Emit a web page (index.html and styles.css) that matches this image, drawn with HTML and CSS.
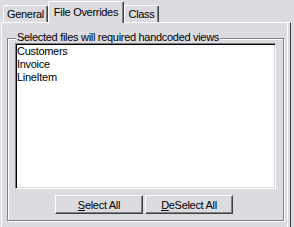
FILE: index.html
```html
<!DOCTYPE html>
<html lang="en">
<head>
  <meta charset="UTF-8" />
  <title>File Overrides</title>
  <link rel="stylesheet" href="styles.css">
</head>
<body>
  <div class="tabstrip">
    <div class="tab">General</div>
    <div class="tab tab-active">File Overrides</div>
    <div class="tab tab-class">Class</div>
  </div>
  <div class="panel">
    <fieldset class="group">
      <legend>Selected files will required handcoded views</legend>
      <div class="listbox">
        <div class="item">Customers</div>
        <div class="item">Invoice</div>
        <div class="item">LineItem</div>
      </div>
      <div class="buttons">
        <button type="button" class="btn"><u>S</u>elect All</button>
        <button type="button" class="btn"><u>D</u>eSelect All</button>
      </div>
    </fieldset>
  </div>
</body>
</html>
```

FILE: styles.css
```css
* {
  box-sizing: border-box;
}
body {
  margin: 0;
  width: 294px;
  height: 227px;
  overflow: hidden;
  background-color: #dbdbe0;
  font-family: "Liberation Sans", Arial, sans-serif;
  font-size: 11px;
  letter-spacing: -0.3px;
  color: #000;
}
.tabstrip {
  display: flex;
  align-items: flex-end;
  height: 22px;
  padding-left: 3px;
}
.tab {
  width: 45px;
  height: 17px;
  line-height: 16px;
  text-align: center;
  border-top: 1px solid #fff;
  border-left: 1px solid #fff;
  border-right: 1px solid #404040;
  border-radius: 2px 2px 0 0;
  box-shadow: inset -1px 0 0 #808080;
}
.tab-active {
  position: relative;
  z-index: 1;
  width: 76px;
  height: 22px;
  margin-bottom: -1px;
  padding-top: 3px;
  line-height: 14px;
  background-color: #dbdbe0;
}
.tab-class {
  width: 35px;
}
.panel {
  width: 290px;
  height: 210px;
  margin-left: 1px;
  border-top: 1px solid #fff;
  border-left: 1px solid #fff;
  border-right: 1px solid #404040;
  box-shadow: inset -2px 0 0 #dbdbe0, inset -3px 0 0 #fff;
}
.group {
  width: 277px;
  margin: 8px 0 0 5px;
  padding: 0 7px 6px;
  border: 1px solid #808080;
  box-shadow: 1px 1px 0 #fff, inset 1px 1px 0 #fff;
}
.group legend {
  margin-left: 1px;
  padding: 0 1px 3px;
  line-height: 12px;
  background-color: #dbdbe0;
}
.listbox {
  height: 146px;
  margin-top: -3px;
  padding: 1px 0 0 1px;
  background-color: #fff;
  border: 1px solid;
  border-color: #808080 #fff #fff #808080;
  box-shadow: inset 1px 1px 0 #000, inset -1px -1px 0 #dbdbe0;
}
.item {
  line-height: 13px;
}
.buttons {
  display: flex;
  gap: 2px;
  margin: 6px 0 0 40px;
}
.btn {
  width: 88px;
  height: 19px;
  padding: 0;
  font-family: inherit;
  font-size: 11px;
  letter-spacing: -0.3px;
  color: #000;
  background-color: #dbdbe0;
  border-top: 1px solid #fff;
  border-left: 1px solid #fff;
  border-right: 1px solid #404040;
  border-bottom: 1px solid #404040;
  border-radius: 0;
  box-shadow: inset -1px -1px 0 #808080;
}
```
